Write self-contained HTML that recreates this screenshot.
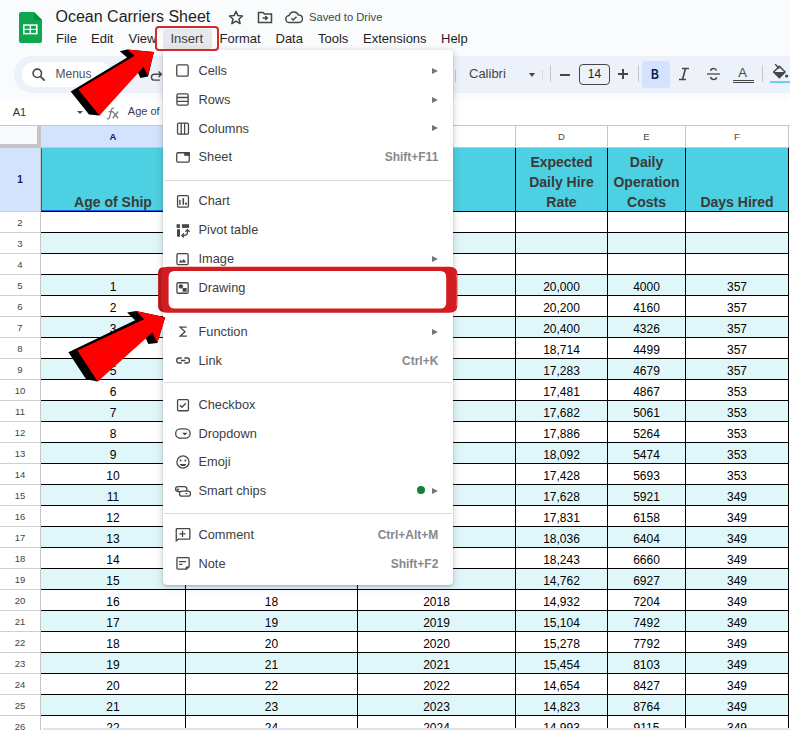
<!DOCTYPE html>
<html><head><meta charset="utf-8">
<style>
*{margin:0;padding:0;box-sizing:border-box}
html,body{width:790px;height:730px;overflow:hidden;background:#f9fbfd;font-family:"Liberation Sans",sans-serif;color:#1f1f1f;position:relative}
.a{position:absolute;white-space:nowrap}
.mb{font-size:13px;top:30.7px;line-height:16px}
#grid{position:absolute;left:0;top:125px;width:790px;height:605px;background:#fff;overflow:hidden}
table{border-collapse:collapse;table-layout:fixed;position:absolute;left:0;top:0}
td{padding:0;overflow:hidden;white-space:nowrap;text-align:center}
.rh{font-size:10px;color:#444;border-right:1px solid #c7c7c7;border-bottom:1px solid #e1e1e1;background:#fff}
.ch{font-size:10px;color:#444;border-right:1px solid #e1e1e1;border-bottom:1px solid #c7c7c7;border-top:1px solid #c7c7c7;height:22px;vertical-align:middle}
.d td.c{border:1px solid #000;font-size:12px;color:#000;height:21px}
.lt td.c{background:#e0f7fa}
#menu{position:absolute;left:163px;top:52px;width:290px;height:533px;background:#fff;border-radius:4px;box-shadow:0 2px 6px 2px rgba(60,64,67,.15),0 1px 2px rgba(60,64,67,.3)}
.mi{position:absolute;left:0;width:290px;height:20px;font-size:12.5px;color:#1f1f1f}
.mi .t{position:absolute;left:35px;top:2px}
.mi .k{position:absolute;right:15px;top:2px;color:#80868b;font-size:12.5px}
.mi .ar{position:absolute;right:15px;top:5px;width:0;height:0;border-left:6px solid #6f7377;border-top:3.5px solid transparent;border-bottom:3.5px solid transparent}
.mi svg{position:absolute;left:12px;top:3px}
.sep{position:absolute;left:1px;width:288px;height:1px;background:#dadce0}
</style></head><body>

<!-- logo -->
<svg class="a" style="left:19px;top:12px" width="23" height="31" viewBox="0 0 23 31">
<path d="M2 0H15L23 8V29a2 2 0 0 1-2 2H2a2 2 0 0 1-2-2V2a2 2 0 0 1 2-2z" fill="#0ea64e"/>
<path d="M15 0L23 8H17a2 2 0 0 1-2-2z" fill="#07903c"/>
<rect x="4" y="12.3" width="14.6" height="10.1" fill="#fff"/>
<rect x="5.6" y="13.8" width="5" height="3" fill="#0ea64e"/>
<rect x="12" y="13.8" width="5" height="3" fill="#0ea64e"/>
<rect x="5.6" y="17.9" width="5" height="3" fill="#0ea64e"/>
<rect x="12" y="17.9" width="5" height="3" fill="#0ea64e"/>
</svg>

<div class="a" style="left:55.5px;top:7.2px;font-size:16px;line-height:19px;color:#1f1f1f">Ocean Carriers Sheet</div>
<!-- star -->
<svg class="a" style="left:228px;top:10px" width="16" height="15" viewBox="0 0 16 15"><path d="M8 1.3l1.9 4.3 4.6.4-3.5 3 1.1 4.6L8 11.2l-4.1 2.4L5 9 1.5 6l4.6-.4z" fill="none" stroke="#444746" stroke-width="1.5" stroke-linejoin="round"/></svg>
<!-- folder -->
<svg class="a" style="left:257px;top:11px" width="16" height="13" viewBox="0 0 16 13"><path d="M1.5 1.5h4.5l1.5 1.5h7v8.5h-13z" fill="none" stroke="#444746" stroke-width="1.5"/><path d="M5.5 7h4.5M8.3 5l2 2-2 2" fill="none" stroke="#444746" stroke-width="1.5"/></svg>
<!-- cloud -->
<svg class="a" style="left:285px;top:11px" width="18" height="13" viewBox="0 0 18 13"><path d="M4.5 11.5a3.5 3.5 0 0 1-.4-7A5 5 0 0 1 13.5 4a3.7 3.7 0 0 1 .5 7.5z" fill="none" stroke="#444746" stroke-width="1.5"/><path d="M6.3 7.3l1.8 1.8 3.4-3.4" fill="none" stroke="#444746" stroke-width="1.4"/></svg>
<div class="a" style="left:309px;top:10.2px;font-size:11.2px;line-height:14px;color:#444746">Saved to Drive</div>

<!-- menubar -->
<div class="a" style="left:162.8px;top:29px;width:49.5px;height:20px;background:#e6e8eb;border-radius:3px"></div>
<div class="a mb" style="left:56px">File</div>
<div class="a mb" style="left:91px">Edit</div>
<div class="a mb" style="left:128.5px">View</div>
<div class="a mb" style="left:170.5px;color:#3c3c3c">Insert</div>
<div class="a mb" style="left:219.5px">Format</div>
<div class="a mb" style="left:275.5px">Data</div>
<div class="a mb" style="left:318px">Tools</div>
<div class="a mb" style="left:363px">Extensions</div>
<div class="a mb" style="left:441px">Help</div>
<div class="a" style="z-index:5;left:155.2px;top:26px;width:64px;height:25.2px;border:2.2px solid #d42a2a;border-radius:4px"></div>

<!-- toolbar -->
<div class="a" style="left:14px;top:56px;width:800px;height:36.5px;background:#edf2fa;border-radius:18px"></div>
<div class="a" style="left:22px;top:62px;width:90px;height:25px;background:#fff;border-radius:12.5px"></div>
<svg class="a" style="left:32px;top:68px" width="14" height="13" viewBox="0 0 14 13"><circle cx="5.3" cy="5.3" r="4.2" fill="none" stroke="#444746" stroke-width="1.6"/><path d="M8.3 8.3l4.4 4.4" stroke="#444746" stroke-width="1.7"/></svg>
<div class="a" style="left:55.5px;top:67px;font-size:12px;line-height:14px;color:#4d5156">Menus</div>
<svg class="a" style="left:148px;top:68px" width="16" height="16" viewBox="148 68 16 16"><path d="M160 80.1H154.4a2.95 2.95 0 0 1 0-5.9H161.3M158.6 71.4l2.8 2.8-2.8 2.8" fill="none" stroke="#444746" stroke-width="1.4"/></svg>
<div class="a" style="left:455px;top:70px;width:1px;height:12px;background:#c7c7c7"></div>
<div class="a" style="left:469px;top:66px;font-size:13px;line-height:16px;color:#444746">Calibri</div>
<div class="a" style="left:529px;top:72.5px;width:0;height:0;border-top:4px solid #444746;border-left:3.7px solid transparent;border-right:3.7px solid transparent"></div>
<div class="a" style="left:542px;top:71px;width:1px;height:9px;border-left:1px dotted #c7c7c7"></div>
<div class="a" style="left:550px;top:65px;width:1px;height:17px;background:#c7c7c7"></div>
<div class="a" style="left:560px;top:74px;width:10px;height:1.5px;background:#444746"></div>
<div class="a" style="left:579px;top:64px;width:31px;height:20.5px;border:1px solid #444746;border-radius:4px;font-size:12px;line-height:18px;text-align:center;color:#1f1f1f">14</div>
<div class="a" style="left:618px;top:73.3px;width:10px;height:1.5px;background:#444746"></div>
<div class="a" style="left:622.3px;top:69px;width:1.5px;height:10px;background:#444746"></div>
<div class="a" style="left:638px;top:65px;width:1px;height:17px;background:#c7c7c7"></div>
<div class="a" style="left:642px;top:61px;width:27.5px;height:27px;background:#d3e3fd;border-radius:4px"></div>
<div class="a" style="left:650.5px;top:66.5px;font-size:14px;font-weight:bold;line-height:15px;color:#0b1f51;transform:scaleX(.78);transform-origin:0 0">B</div>
<svg class="a" style="left:678px;top:67px" width="12" height="14" viewBox="0 0 12 14"><path d="M4 1.5h7M1 12.5h7M7.5 1.5l-3 11" fill="none" stroke="#444746" stroke-width="1.6"/></svg>
<svg class="a" style="left:706px;top:66px" width="15" height="16" viewBox="0 0 15 16"><path d="M1 8h13" stroke="#444746" stroke-width="1.3"/><path d="M10.5 4.5C10 3 9 2.5 7.5 2.5S4.5 3.5 4.8 5M4.5 11c.5 1.5 1.5 2.5 3 2.5s3-1 3-2.3" fill="none" stroke="#444746" stroke-width="1.5"/></svg>
<div class="a" style="left:738.3px;top:64.6px;font-size:13px;line-height:15px;color:#444746">A</div>
<div class="a" style="left:733px;top:80px;width:21px;height:1.3px;background:#444746"></div>
<div class="a" style="left:733px;top:82.2px;width:21px;height:1.3px;background:#444746"></div>
<div class="a" style="left:762px;top:65px;width:1px;height:17px;background:#c7c7c7"></div>
<svg class="a" style="left:765px;top:60px" width="25" height="26" viewBox="765 60 25 26"><path d="M773.6 72L779.4 66.3 785.1 72 779.4 77.7z" fill="none" stroke="#444746" stroke-width="1.5" stroke-linejoin="round"/><path d="M773.6 72H785.1L779.4 77.7z" fill="#444746"/><path d="M775.2 64.3l4.2 4.2" stroke="#444746" stroke-width="1.5"/><circle cx="786.6" cy="76" r="1.6" fill="#444746"/><rect x="770" y="81.3" width="20" height="1.6" fill="#4dc6e0"/></svg>

<!-- formula bar -->
<div class="a" style="left:0;top:100px;width:790px;height:26px;background:#fff"></div>
<div class="a" style="left:12.7px;top:104.7px;font-size:11px;line-height:14px;color:#333">A1</div>
<div class="a" style="left:77.3px;top:110.6px;width:0;height:0;border-top:3.6px solid #444746;border-left:3.9px solid transparent;border-right:3.9px solid transparent"></div>
<svg class="a" style="left:100px;top:100px" width="25" height="25" viewBox="100 100 25 25"><path d="M114 108.3c-1.2-.5-2.2 0-2.6 1.6l-1.8 7.3c-.4 1.5-1.3 2-2.6 1.5M108.6 111.6h4.2" fill="none" stroke="#7d7d7d" stroke-width="1.3"/><path d="M112.8 111.6l5.3 6.6M118 111.6l-5.2 6.6" fill="none" stroke="#7d7d7d" stroke-width="1.4"/></svg>
<div class="a" style="left:127.8px;top:104.2px;font-size:11px;line-height:14px;color:#3c4043">Age of Ship</div>

<div class="a" style="left:0;top:125px;width:790px;height:605px;background:#fff"></div>
<div class="a" style="left:0;top:125px;width:790px;height:1px;background:#c7c7c7"></div>
<div class="a" style="left:0;top:126px;width:37px;height:18px;background:#f8f9fa"></div>
<div class="a" style="left:37px;top:126px;width:4px;height:22px;background:#c4c4c4"></div>
<div class="a" style="left:0;top:144px;width:41px;height:4px;background:#c4c4c4"></div>
<div class="a" style="left:41px;top:126px;width:144px;height:21px;background:#d3e3fd"></div>
<div class="a" style="left:41px;top:126px;width:144px;height:21px;line-height:21px;text-align:center;font-size:9.5px;font-weight:bold;color:#0b1f51">A</div>
<div class="a" style="left:185px;top:126px;width:1px;height:21px;background:#c7c7c7"></div>
<div class="a" style="left:186px;top:126px;width:171px;height:21px;line-height:21px;text-align:center;font-size:9.5px;color:#444">B</div>
<div class="a" style="left:357px;top:126px;width:1px;height:21px;background:#c7c7c7"></div>
<div class="a" style="left:358px;top:126px;width:157px;height:21px;line-height:21px;text-align:center;font-size:9.5px;color:#444">C</div>
<div class="a" style="left:515px;top:126px;width:1px;height:21px;background:#c7c7c7"></div>
<div class="a" style="left:516px;top:126px;width:91px;height:21px;line-height:21px;text-align:center;font-size:9.5px;color:#444">D</div>
<div class="a" style="left:607px;top:126px;width:1px;height:21px;background:#c7c7c7"></div>
<div class="a" style="left:608px;top:126px;width:77px;height:21px;line-height:21px;text-align:center;font-size:9.5px;color:#444">E</div>
<div class="a" style="left:685px;top:126px;width:1px;height:21px;background:#c7c7c7"></div>
<div class="a" style="left:686px;top:126px;width:102px;height:21px;line-height:21px;text-align:center;font-size:9.5px;color:#444">F</div>
<div class="a" style="left:788px;top:126px;width:1px;height:21px;background:#c7c7c7"></div>
<div class="a" style="left:0;top:148px;width:40px;height:63px;background:#d3e3fd"></div>
<div class="a" style="left:40px;top:148px;width:1px;height:582px;background:#c7c7c7"></div>
<div class="a" style="left:0;top:147px;width:790px;height:1px;background:#c7c7c7"></div>
<div class="a" style="left:41px;top:148px;width:747px;height:63px;background:#4dd0e1"></div>
<div class="a" style="left:0;top:148px;width:40px;height:63px;line-height:63px;text-align:center;font-size:10px;font-weight:bold;color:#0b1f51">1</div>
<div class="a" style="left:41px;top:192px;width:144px;line-height:20px;text-align:center;font-size:14px;font-weight:bold;color:#3a3a3a;white-space:normal">Age of Ship</div>
<div class="a" style="left:516px;top:152px;width:91px;line-height:20px;text-align:center;font-size:14px;font-weight:bold;color:#3a3a3a;white-space:normal">Expected<br>Daily Hire<br>Rate</div>
<div class="a" style="left:608px;top:152px;width:77px;line-height:20px;text-align:center;font-size:14px;font-weight:bold;color:#3a3a3a;white-space:normal">Daily<br>Operation<br>Costs</div>
<div class="a" style="left:686px;top:192px;width:102px;line-height:20px;text-align:center;font-size:14px;font-weight:bold;color:#3a3a3a;white-space:normal">Days Hired</div>
<div class="a" style="left:185px;top:148px;width:1px;height:63px;background:#000"></div>
<div class="a" style="left:357px;top:148px;width:1px;height:63px;background:#000"></div>
<div class="a" style="left:515px;top:148px;width:1px;height:63px;background:#000"></div>
<div class="a" style="left:607px;top:148px;width:1px;height:63px;background:#000"></div>
<div class="a" style="left:685px;top:148px;width:1px;height:63px;background:#000"></div>
<div class="a" style="left:788px;top:148px;width:1px;height:63px;background:#000"></div>
<div class="a" style="left:0;top:232px;width:40px;height:1px;background:#d0d0d0"></div>
<div class="a" style="left:0;top:212.8px;width:40px;height:20px;line-height:20px;text-align:center;font-size:9.5px;color:#444">2</div>
<div class="a" style="left:41px;top:232px;width:748px;height:1px;background:#000"></div>
<div class="a" style="left:0;top:253px;width:40px;height:1px;background:#d0d0d0"></div>
<div class="a" style="left:0;top:233.8px;width:40px;height:20px;line-height:20px;text-align:center;font-size:9.5px;color:#444">3</div>
<div class="a" style="left:41px;top:233px;width:747px;height:20px;background:#e0f7fa"></div>
<div class="a" style="left:41px;top:253px;width:748px;height:1px;background:#000"></div>
<div class="a" style="left:0;top:274px;width:40px;height:1px;background:#d0d0d0"></div>
<div class="a" style="left:0;top:254.8px;width:40px;height:20px;line-height:20px;text-align:center;font-size:9.5px;color:#444">4</div>
<div class="a" style="left:41px;top:274px;width:748px;height:1px;background:#000"></div>
<div class="a" style="left:0;top:295px;width:40px;height:1px;background:#d0d0d0"></div>
<div class="a" style="left:0;top:275.8px;width:40px;height:20px;line-height:20px;text-align:center;font-size:9.5px;color:#444">5</div>
<div class="a" style="left:41px;top:275px;width:747px;height:20px;background:#e0f7fa"></div>
<div class="a" style="left:41px;top:295px;width:748px;height:1px;background:#000"></div>
<div class="a" style="left:41px;top:276.8px;width:144px;line-height:20px;text-align:center;font-size:12px;color:#000">1</div>
<div class="a" style="left:186px;top:276.8px;width:171px;line-height:20px;text-align:center;font-size:12px;color:#000">3</div>
<div class="a" style="left:358px;top:276.8px;width:157px;line-height:20px;text-align:center;font-size:12px;color:#000">2003</div>
<div class="a" style="left:516px;top:276.8px;width:91px;line-height:20px;text-align:center;font-size:12px;color:#000">20,000</div>
<div class="a" style="left:608px;top:276.8px;width:77px;line-height:20px;text-align:center;font-size:12px;color:#000">4000</div>
<div class="a" style="left:686px;top:276.8px;width:102px;line-height:20px;text-align:center;font-size:12px;color:#000">357</div>
<div class="a" style="left:0;top:316px;width:40px;height:1px;background:#d0d0d0"></div>
<div class="a" style="left:0;top:296.8px;width:40px;height:20px;line-height:20px;text-align:center;font-size:9.5px;color:#444">6</div>
<div class="a" style="left:41px;top:316px;width:748px;height:1px;background:#000"></div>
<div class="a" style="left:41px;top:297.8px;width:144px;line-height:20px;text-align:center;font-size:12px;color:#000">2</div>
<div class="a" style="left:186px;top:297.8px;width:171px;line-height:20px;text-align:center;font-size:12px;color:#000">4</div>
<div class="a" style="left:358px;top:297.8px;width:157px;line-height:20px;text-align:center;font-size:12px;color:#000">2004</div>
<div class="a" style="left:516px;top:297.8px;width:91px;line-height:20px;text-align:center;font-size:12px;color:#000">20,200</div>
<div class="a" style="left:608px;top:297.8px;width:77px;line-height:20px;text-align:center;font-size:12px;color:#000">4160</div>
<div class="a" style="left:686px;top:297.8px;width:102px;line-height:20px;text-align:center;font-size:12px;color:#000">357</div>
<div class="a" style="left:0;top:337px;width:40px;height:1px;background:#d0d0d0"></div>
<div class="a" style="left:0;top:317.8px;width:40px;height:20px;line-height:20px;text-align:center;font-size:9.5px;color:#444">7</div>
<div class="a" style="left:41px;top:317px;width:747px;height:20px;background:#e0f7fa"></div>
<div class="a" style="left:41px;top:337px;width:748px;height:1px;background:#000"></div>
<div class="a" style="left:41px;top:318.8px;width:144px;line-height:20px;text-align:center;font-size:12px;color:#000">3</div>
<div class="a" style="left:186px;top:318.8px;width:171px;line-height:20px;text-align:center;font-size:12px;color:#000">5</div>
<div class="a" style="left:358px;top:318.8px;width:157px;line-height:20px;text-align:center;font-size:12px;color:#000">2005</div>
<div class="a" style="left:516px;top:318.8px;width:91px;line-height:20px;text-align:center;font-size:12px;color:#000">20,400</div>
<div class="a" style="left:608px;top:318.8px;width:77px;line-height:20px;text-align:center;font-size:12px;color:#000">4326</div>
<div class="a" style="left:686px;top:318.8px;width:102px;line-height:20px;text-align:center;font-size:12px;color:#000">357</div>
<div class="a" style="left:0;top:358px;width:40px;height:1px;background:#d0d0d0"></div>
<div class="a" style="left:0;top:338.8px;width:40px;height:20px;line-height:20px;text-align:center;font-size:9.5px;color:#444">8</div>
<div class="a" style="left:41px;top:358px;width:748px;height:1px;background:#000"></div>
<div class="a" style="left:41px;top:339.8px;width:144px;line-height:20px;text-align:center;font-size:12px;color:#000">4</div>
<div class="a" style="left:186px;top:339.8px;width:171px;line-height:20px;text-align:center;font-size:12px;color:#000">6</div>
<div class="a" style="left:358px;top:339.8px;width:157px;line-height:20px;text-align:center;font-size:12px;color:#000">2006</div>
<div class="a" style="left:516px;top:339.8px;width:91px;line-height:20px;text-align:center;font-size:12px;color:#000">18,714</div>
<div class="a" style="left:608px;top:339.8px;width:77px;line-height:20px;text-align:center;font-size:12px;color:#000">4499</div>
<div class="a" style="left:686px;top:339.8px;width:102px;line-height:20px;text-align:center;font-size:12px;color:#000">357</div>
<div class="a" style="left:0;top:379px;width:40px;height:1px;background:#d0d0d0"></div>
<div class="a" style="left:0;top:359.8px;width:40px;height:20px;line-height:20px;text-align:center;font-size:9.5px;color:#444">9</div>
<div class="a" style="left:41px;top:359px;width:747px;height:20px;background:#e0f7fa"></div>
<div class="a" style="left:41px;top:379px;width:748px;height:1px;background:#000"></div>
<div class="a" style="left:41px;top:360.8px;width:144px;line-height:20px;text-align:center;font-size:12px;color:#000">5</div>
<div class="a" style="left:186px;top:360.8px;width:171px;line-height:20px;text-align:center;font-size:12px;color:#000">7</div>
<div class="a" style="left:358px;top:360.8px;width:157px;line-height:20px;text-align:center;font-size:12px;color:#000">2007</div>
<div class="a" style="left:516px;top:360.8px;width:91px;line-height:20px;text-align:center;font-size:12px;color:#000">17,283</div>
<div class="a" style="left:608px;top:360.8px;width:77px;line-height:20px;text-align:center;font-size:12px;color:#000">4679</div>
<div class="a" style="left:686px;top:360.8px;width:102px;line-height:20px;text-align:center;font-size:12px;color:#000">357</div>
<div class="a" style="left:0;top:400px;width:40px;height:1px;background:#d0d0d0"></div>
<div class="a" style="left:0;top:380.8px;width:40px;height:20px;line-height:20px;text-align:center;font-size:9.5px;color:#444">10</div>
<div class="a" style="left:41px;top:400px;width:748px;height:1px;background:#000"></div>
<div class="a" style="left:41px;top:381.8px;width:144px;line-height:20px;text-align:center;font-size:12px;color:#000">6</div>
<div class="a" style="left:186px;top:381.8px;width:171px;line-height:20px;text-align:center;font-size:12px;color:#000">8</div>
<div class="a" style="left:358px;top:381.8px;width:157px;line-height:20px;text-align:center;font-size:12px;color:#000">2008</div>
<div class="a" style="left:516px;top:381.8px;width:91px;line-height:20px;text-align:center;font-size:12px;color:#000">17,481</div>
<div class="a" style="left:608px;top:381.8px;width:77px;line-height:20px;text-align:center;font-size:12px;color:#000">4867</div>
<div class="a" style="left:686px;top:381.8px;width:102px;line-height:20px;text-align:center;font-size:12px;color:#000">353</div>
<div class="a" style="left:0;top:421px;width:40px;height:1px;background:#d0d0d0"></div>
<div class="a" style="left:0;top:401.8px;width:40px;height:20px;line-height:20px;text-align:center;font-size:9.5px;color:#444">11</div>
<div class="a" style="left:41px;top:401px;width:747px;height:20px;background:#e0f7fa"></div>
<div class="a" style="left:41px;top:421px;width:748px;height:1px;background:#000"></div>
<div class="a" style="left:41px;top:402.8px;width:144px;line-height:20px;text-align:center;font-size:12px;color:#000">7</div>
<div class="a" style="left:186px;top:402.8px;width:171px;line-height:20px;text-align:center;font-size:12px;color:#000">9</div>
<div class="a" style="left:358px;top:402.8px;width:157px;line-height:20px;text-align:center;font-size:12px;color:#000">2009</div>
<div class="a" style="left:516px;top:402.8px;width:91px;line-height:20px;text-align:center;font-size:12px;color:#000">17,682</div>
<div class="a" style="left:608px;top:402.8px;width:77px;line-height:20px;text-align:center;font-size:12px;color:#000">5061</div>
<div class="a" style="left:686px;top:402.8px;width:102px;line-height:20px;text-align:center;font-size:12px;color:#000">353</div>
<div class="a" style="left:0;top:442px;width:40px;height:1px;background:#d0d0d0"></div>
<div class="a" style="left:0;top:422.8px;width:40px;height:20px;line-height:20px;text-align:center;font-size:9.5px;color:#444">12</div>
<div class="a" style="left:41px;top:442px;width:748px;height:1px;background:#000"></div>
<div class="a" style="left:41px;top:423.8px;width:144px;line-height:20px;text-align:center;font-size:12px;color:#000">8</div>
<div class="a" style="left:186px;top:423.8px;width:171px;line-height:20px;text-align:center;font-size:12px;color:#000">10</div>
<div class="a" style="left:358px;top:423.8px;width:157px;line-height:20px;text-align:center;font-size:12px;color:#000">2010</div>
<div class="a" style="left:516px;top:423.8px;width:91px;line-height:20px;text-align:center;font-size:12px;color:#000">17,886</div>
<div class="a" style="left:608px;top:423.8px;width:77px;line-height:20px;text-align:center;font-size:12px;color:#000">5264</div>
<div class="a" style="left:686px;top:423.8px;width:102px;line-height:20px;text-align:center;font-size:12px;color:#000">353</div>
<div class="a" style="left:0;top:463px;width:40px;height:1px;background:#d0d0d0"></div>
<div class="a" style="left:0;top:443.8px;width:40px;height:20px;line-height:20px;text-align:center;font-size:9.5px;color:#444">13</div>
<div class="a" style="left:41px;top:443px;width:747px;height:20px;background:#e0f7fa"></div>
<div class="a" style="left:41px;top:463px;width:748px;height:1px;background:#000"></div>
<div class="a" style="left:41px;top:444.8px;width:144px;line-height:20px;text-align:center;font-size:12px;color:#000">9</div>
<div class="a" style="left:186px;top:444.8px;width:171px;line-height:20px;text-align:center;font-size:12px;color:#000">11</div>
<div class="a" style="left:358px;top:444.8px;width:157px;line-height:20px;text-align:center;font-size:12px;color:#000">2011</div>
<div class="a" style="left:516px;top:444.8px;width:91px;line-height:20px;text-align:center;font-size:12px;color:#000">18,092</div>
<div class="a" style="left:608px;top:444.8px;width:77px;line-height:20px;text-align:center;font-size:12px;color:#000">5474</div>
<div class="a" style="left:686px;top:444.8px;width:102px;line-height:20px;text-align:center;font-size:12px;color:#000">353</div>
<div class="a" style="left:0;top:484px;width:40px;height:1px;background:#d0d0d0"></div>
<div class="a" style="left:0;top:464.8px;width:40px;height:20px;line-height:20px;text-align:center;font-size:9.5px;color:#444">14</div>
<div class="a" style="left:41px;top:484px;width:748px;height:1px;background:#000"></div>
<div class="a" style="left:41px;top:465.8px;width:144px;line-height:20px;text-align:center;font-size:12px;color:#000">10</div>
<div class="a" style="left:186px;top:465.8px;width:171px;line-height:20px;text-align:center;font-size:12px;color:#000">12</div>
<div class="a" style="left:358px;top:465.8px;width:157px;line-height:20px;text-align:center;font-size:12px;color:#000">2012</div>
<div class="a" style="left:516px;top:465.8px;width:91px;line-height:20px;text-align:center;font-size:12px;color:#000">17,428</div>
<div class="a" style="left:608px;top:465.8px;width:77px;line-height:20px;text-align:center;font-size:12px;color:#000">5693</div>
<div class="a" style="left:686px;top:465.8px;width:102px;line-height:20px;text-align:center;font-size:12px;color:#000">353</div>
<div class="a" style="left:0;top:505px;width:40px;height:1px;background:#d0d0d0"></div>
<div class="a" style="left:0;top:485.8px;width:40px;height:20px;line-height:20px;text-align:center;font-size:9.5px;color:#444">15</div>
<div class="a" style="left:41px;top:485px;width:747px;height:20px;background:#e0f7fa"></div>
<div class="a" style="left:41px;top:505px;width:748px;height:1px;background:#000"></div>
<div class="a" style="left:41px;top:486.8px;width:144px;line-height:20px;text-align:center;font-size:12px;color:#000">11</div>
<div class="a" style="left:186px;top:486.8px;width:171px;line-height:20px;text-align:center;font-size:12px;color:#000">13</div>
<div class="a" style="left:358px;top:486.8px;width:157px;line-height:20px;text-align:center;font-size:12px;color:#000">2013</div>
<div class="a" style="left:516px;top:486.8px;width:91px;line-height:20px;text-align:center;font-size:12px;color:#000">17,628</div>
<div class="a" style="left:608px;top:486.8px;width:77px;line-height:20px;text-align:center;font-size:12px;color:#000">5921</div>
<div class="a" style="left:686px;top:486.8px;width:102px;line-height:20px;text-align:center;font-size:12px;color:#000">349</div>
<div class="a" style="left:0;top:526px;width:40px;height:1px;background:#d0d0d0"></div>
<div class="a" style="left:0;top:506.8px;width:40px;height:20px;line-height:20px;text-align:center;font-size:9.5px;color:#444">16</div>
<div class="a" style="left:41px;top:526px;width:748px;height:1px;background:#000"></div>
<div class="a" style="left:41px;top:507.8px;width:144px;line-height:20px;text-align:center;font-size:12px;color:#000">12</div>
<div class="a" style="left:186px;top:507.8px;width:171px;line-height:20px;text-align:center;font-size:12px;color:#000">14</div>
<div class="a" style="left:358px;top:507.8px;width:157px;line-height:20px;text-align:center;font-size:12px;color:#000">2014</div>
<div class="a" style="left:516px;top:507.8px;width:91px;line-height:20px;text-align:center;font-size:12px;color:#000">17,831</div>
<div class="a" style="left:608px;top:507.8px;width:77px;line-height:20px;text-align:center;font-size:12px;color:#000">6158</div>
<div class="a" style="left:686px;top:507.8px;width:102px;line-height:20px;text-align:center;font-size:12px;color:#000">349</div>
<div class="a" style="left:0;top:547px;width:40px;height:1px;background:#d0d0d0"></div>
<div class="a" style="left:0;top:527.8px;width:40px;height:20px;line-height:20px;text-align:center;font-size:9.5px;color:#444">17</div>
<div class="a" style="left:41px;top:527px;width:747px;height:20px;background:#e0f7fa"></div>
<div class="a" style="left:41px;top:547px;width:748px;height:1px;background:#000"></div>
<div class="a" style="left:41px;top:528.8px;width:144px;line-height:20px;text-align:center;font-size:12px;color:#000">13</div>
<div class="a" style="left:186px;top:528.8px;width:171px;line-height:20px;text-align:center;font-size:12px;color:#000">15</div>
<div class="a" style="left:358px;top:528.8px;width:157px;line-height:20px;text-align:center;font-size:12px;color:#000">2015</div>
<div class="a" style="left:516px;top:528.8px;width:91px;line-height:20px;text-align:center;font-size:12px;color:#000">18,036</div>
<div class="a" style="left:608px;top:528.8px;width:77px;line-height:20px;text-align:center;font-size:12px;color:#000">6404</div>
<div class="a" style="left:686px;top:528.8px;width:102px;line-height:20px;text-align:center;font-size:12px;color:#000">349</div>
<div class="a" style="left:0;top:568px;width:40px;height:1px;background:#d0d0d0"></div>
<div class="a" style="left:0;top:548.8px;width:40px;height:20px;line-height:20px;text-align:center;font-size:9.5px;color:#444">18</div>
<div class="a" style="left:41px;top:568px;width:748px;height:1px;background:#000"></div>
<div class="a" style="left:41px;top:549.8px;width:144px;line-height:20px;text-align:center;font-size:12px;color:#000">14</div>
<div class="a" style="left:186px;top:549.8px;width:171px;line-height:20px;text-align:center;font-size:12px;color:#000">16</div>
<div class="a" style="left:358px;top:549.8px;width:157px;line-height:20px;text-align:center;font-size:12px;color:#000">2016</div>
<div class="a" style="left:516px;top:549.8px;width:91px;line-height:20px;text-align:center;font-size:12px;color:#000">18,243</div>
<div class="a" style="left:608px;top:549.8px;width:77px;line-height:20px;text-align:center;font-size:12px;color:#000">6660</div>
<div class="a" style="left:686px;top:549.8px;width:102px;line-height:20px;text-align:center;font-size:12px;color:#000">349</div>
<div class="a" style="left:0;top:589px;width:40px;height:1px;background:#d0d0d0"></div>
<div class="a" style="left:0;top:569.8px;width:40px;height:20px;line-height:20px;text-align:center;font-size:9.5px;color:#444">19</div>
<div class="a" style="left:41px;top:569px;width:747px;height:20px;background:#e0f7fa"></div>
<div class="a" style="left:41px;top:589px;width:748px;height:1px;background:#000"></div>
<div class="a" style="left:41px;top:570.8px;width:144px;line-height:20px;text-align:center;font-size:12px;color:#000">15</div>
<div class="a" style="left:186px;top:570.8px;width:171px;line-height:20px;text-align:center;font-size:12px;color:#000">17</div>
<div class="a" style="left:358px;top:570.8px;width:157px;line-height:20px;text-align:center;font-size:12px;color:#000">2017</div>
<div class="a" style="left:516px;top:570.8px;width:91px;line-height:20px;text-align:center;font-size:12px;color:#000">14,762</div>
<div class="a" style="left:608px;top:570.8px;width:77px;line-height:20px;text-align:center;font-size:12px;color:#000">6927</div>
<div class="a" style="left:686px;top:570.8px;width:102px;line-height:20px;text-align:center;font-size:12px;color:#000">349</div>
<div class="a" style="left:0;top:610px;width:40px;height:1px;background:#d0d0d0"></div>
<div class="a" style="left:0;top:590.8px;width:40px;height:20px;line-height:20px;text-align:center;font-size:9.5px;color:#444">20</div>
<div class="a" style="left:41px;top:610px;width:748px;height:1px;background:#000"></div>
<div class="a" style="left:41px;top:591.8px;width:144px;line-height:20px;text-align:center;font-size:12px;color:#000">16</div>
<div class="a" style="left:186px;top:591.8px;width:171px;line-height:20px;text-align:center;font-size:12px;color:#000">18</div>
<div class="a" style="left:358px;top:591.8px;width:157px;line-height:20px;text-align:center;font-size:12px;color:#000">2018</div>
<div class="a" style="left:516px;top:591.8px;width:91px;line-height:20px;text-align:center;font-size:12px;color:#000">14,932</div>
<div class="a" style="left:608px;top:591.8px;width:77px;line-height:20px;text-align:center;font-size:12px;color:#000">7204</div>
<div class="a" style="left:686px;top:591.8px;width:102px;line-height:20px;text-align:center;font-size:12px;color:#000">349</div>
<div class="a" style="left:0;top:631px;width:40px;height:1px;background:#d0d0d0"></div>
<div class="a" style="left:0;top:611.8px;width:40px;height:20px;line-height:20px;text-align:center;font-size:9.5px;color:#444">21</div>
<div class="a" style="left:41px;top:611px;width:747px;height:20px;background:#e0f7fa"></div>
<div class="a" style="left:41px;top:631px;width:748px;height:1px;background:#000"></div>
<div class="a" style="left:41px;top:612.8px;width:144px;line-height:20px;text-align:center;font-size:12px;color:#000">17</div>
<div class="a" style="left:186px;top:612.8px;width:171px;line-height:20px;text-align:center;font-size:12px;color:#000">19</div>
<div class="a" style="left:358px;top:612.8px;width:157px;line-height:20px;text-align:center;font-size:12px;color:#000">2019</div>
<div class="a" style="left:516px;top:612.8px;width:91px;line-height:20px;text-align:center;font-size:12px;color:#000">15,104</div>
<div class="a" style="left:608px;top:612.8px;width:77px;line-height:20px;text-align:center;font-size:12px;color:#000">7492</div>
<div class="a" style="left:686px;top:612.8px;width:102px;line-height:20px;text-align:center;font-size:12px;color:#000">349</div>
<div class="a" style="left:0;top:652px;width:40px;height:1px;background:#d0d0d0"></div>
<div class="a" style="left:0;top:632.8px;width:40px;height:20px;line-height:20px;text-align:center;font-size:9.5px;color:#444">22</div>
<div class="a" style="left:41px;top:652px;width:748px;height:1px;background:#000"></div>
<div class="a" style="left:41px;top:633.8px;width:144px;line-height:20px;text-align:center;font-size:12px;color:#000">18</div>
<div class="a" style="left:186px;top:633.8px;width:171px;line-height:20px;text-align:center;font-size:12px;color:#000">20</div>
<div class="a" style="left:358px;top:633.8px;width:157px;line-height:20px;text-align:center;font-size:12px;color:#000">2020</div>
<div class="a" style="left:516px;top:633.8px;width:91px;line-height:20px;text-align:center;font-size:12px;color:#000">15,278</div>
<div class="a" style="left:608px;top:633.8px;width:77px;line-height:20px;text-align:center;font-size:12px;color:#000">7792</div>
<div class="a" style="left:686px;top:633.8px;width:102px;line-height:20px;text-align:center;font-size:12px;color:#000">349</div>
<div class="a" style="left:0;top:673px;width:40px;height:1px;background:#d0d0d0"></div>
<div class="a" style="left:0;top:653.8px;width:40px;height:20px;line-height:20px;text-align:center;font-size:9.5px;color:#444">23</div>
<div class="a" style="left:41px;top:653px;width:747px;height:20px;background:#e0f7fa"></div>
<div class="a" style="left:41px;top:673px;width:748px;height:1px;background:#000"></div>
<div class="a" style="left:41px;top:654.8px;width:144px;line-height:20px;text-align:center;font-size:12px;color:#000">19</div>
<div class="a" style="left:186px;top:654.8px;width:171px;line-height:20px;text-align:center;font-size:12px;color:#000">21</div>
<div class="a" style="left:358px;top:654.8px;width:157px;line-height:20px;text-align:center;font-size:12px;color:#000">2021</div>
<div class="a" style="left:516px;top:654.8px;width:91px;line-height:20px;text-align:center;font-size:12px;color:#000">15,454</div>
<div class="a" style="left:608px;top:654.8px;width:77px;line-height:20px;text-align:center;font-size:12px;color:#000">8103</div>
<div class="a" style="left:686px;top:654.8px;width:102px;line-height:20px;text-align:center;font-size:12px;color:#000">349</div>
<div class="a" style="left:0;top:694px;width:40px;height:1px;background:#d0d0d0"></div>
<div class="a" style="left:0;top:674.8px;width:40px;height:20px;line-height:20px;text-align:center;font-size:9.5px;color:#444">24</div>
<div class="a" style="left:41px;top:694px;width:748px;height:1px;background:#000"></div>
<div class="a" style="left:41px;top:675.8px;width:144px;line-height:20px;text-align:center;font-size:12px;color:#000">20</div>
<div class="a" style="left:186px;top:675.8px;width:171px;line-height:20px;text-align:center;font-size:12px;color:#000">22</div>
<div class="a" style="left:358px;top:675.8px;width:157px;line-height:20px;text-align:center;font-size:12px;color:#000">2022</div>
<div class="a" style="left:516px;top:675.8px;width:91px;line-height:20px;text-align:center;font-size:12px;color:#000">14,654</div>
<div class="a" style="left:608px;top:675.8px;width:77px;line-height:20px;text-align:center;font-size:12px;color:#000">8427</div>
<div class="a" style="left:686px;top:675.8px;width:102px;line-height:20px;text-align:center;font-size:12px;color:#000">349</div>
<div class="a" style="left:0;top:715px;width:40px;height:1px;background:#d0d0d0"></div>
<div class="a" style="left:0;top:695.8px;width:40px;height:20px;line-height:20px;text-align:center;font-size:9.5px;color:#444">25</div>
<div class="a" style="left:41px;top:695px;width:747px;height:20px;background:#e0f7fa"></div>
<div class="a" style="left:41px;top:715px;width:748px;height:1px;background:#000"></div>
<div class="a" style="left:41px;top:696.8px;width:144px;line-height:20px;text-align:center;font-size:12px;color:#000">21</div>
<div class="a" style="left:186px;top:696.8px;width:171px;line-height:20px;text-align:center;font-size:12px;color:#000">23</div>
<div class="a" style="left:358px;top:696.8px;width:157px;line-height:20px;text-align:center;font-size:12px;color:#000">2023</div>
<div class="a" style="left:516px;top:696.8px;width:91px;line-height:20px;text-align:center;font-size:12px;color:#000">14,823</div>
<div class="a" style="left:608px;top:696.8px;width:77px;line-height:20px;text-align:center;font-size:12px;color:#000">8764</div>
<div class="a" style="left:686px;top:696.8px;width:102px;line-height:20px;text-align:center;font-size:12px;color:#000">349</div>
<div class="a" style="left:0;top:736px;width:40px;height:1px;background:#d0d0d0"></div>
<div class="a" style="left:0;top:716.8px;width:40px;height:20px;line-height:20px;text-align:center;font-size:9.5px;color:#444">26</div>
<div class="a" style="left:41px;top:736px;width:748px;height:1px;background:#000"></div>
<div class="a" style="left:41px;top:717.8px;width:144px;line-height:20px;text-align:center;font-size:12px;color:#000">22</div>
<div class="a" style="left:186px;top:717.8px;width:171px;line-height:20px;text-align:center;font-size:12px;color:#000">24</div>
<div class="a" style="left:358px;top:717.8px;width:157px;line-height:20px;text-align:center;font-size:12px;color:#000">2024</div>
<div class="a" style="left:516px;top:717.8px;width:91px;line-height:20px;text-align:center;font-size:12px;color:#000">14,993</div>
<div class="a" style="left:608px;top:717.8px;width:77px;line-height:20px;text-align:center;font-size:12px;color:#000">9115</div>
<div class="a" style="left:686px;top:717.8px;width:102px;line-height:20px;text-align:center;font-size:12px;color:#000">349</div>
<div class="a" style="left:185px;top:211px;width:1px;height:519px;background:#000"></div>
<div class="a" style="left:357px;top:211px;width:1px;height:519px;background:#000"></div>
<div class="a" style="left:515px;top:211px;width:1px;height:519px;background:#000"></div>
<div class="a" style="left:607px;top:211px;width:1px;height:519px;background:#000"></div>
<div class="a" style="left:685px;top:211px;width:1px;height:519px;background:#000"></div>
<div class="a" style="left:788px;top:211px;width:1px;height:519px;background:#000"></div>
<div class="a" style="left:41px;top:211px;width:748px;height:1px;background:#000"></div>
<div class="a" style="left:0;top:211px;width:40px;height:1px;background:#d0d0d0"></div>
<div class="a" style="left:41px;top:210px;width:144px;height:1px;background:#1a62e0"></div>
<div class="a" style="left:41px;top:148px;width:1px;height:63px;background:#1a62e0"></div>
<div class="a" style="left:43px;top:728px;width:747px;height:2px;background:#e3e3e3"></div>
<div class="a" style="left:163px;top:50px;width:290px;height:535px;background:#fff;border-radius:4px;box-shadow:0 2px 6px 2px rgba(60,64,67,.15),0 1px 2px rgba(60,64,67,.3)"></div>
<div class="a" style="left:198.5px;top:63.9px;font-size:12.8px;line-height:14px;color:#3c4043">Cells</div>
<div class="a" style="left:431.8px;top:67.5px;width:0;height:0;border-left:6px solid #757575;border-top:3.5px solid transparent;border-bottom:3.5px solid transparent"></div>
<div class="a" style="left:198.5px;top:92.9px;font-size:12.8px;line-height:14px;color:#3c4043">Rows</div>
<div class="a" style="left:431.8px;top:96.5px;width:0;height:0;border-left:6px solid #757575;border-top:3.5px solid transparent;border-bottom:3.5px solid transparent"></div>
<div class="a" style="left:198.5px;top:121.7px;font-size:12.8px;line-height:14px;color:#3c4043">Columns</div>
<div class="a" style="left:431.8px;top:125.3px;width:0;height:0;border-left:6px solid #757575;border-top:3.5px solid transparent;border-bottom:3.5px solid transparent"></div>
<div class="a" style="left:198.5px;top:150.4px;font-size:12.8px;line-height:14px;color:#3c4043">Sheet</div>
<div class="a" style="right:351.7px;top:150.4px;font-size:12px;font-weight:bold;line-height:14px;color:#85898d">Shift+F11</div>
<div class="a" style="left:198.5px;top:194.1px;font-size:12.8px;line-height:14px;color:#3c4043">Chart</div>
<div class="a" style="left:198.5px;top:223.1px;font-size:12.8px;line-height:14px;color:#3c4043">Pivot table</div>
<div class="a" style="left:198.5px;top:251.9px;font-size:12.8px;line-height:14px;color:#3c4043">Image</div>
<div class="a" style="left:431.8px;top:255.5px;width:0;height:0;border-left:6px solid #757575;border-top:3.5px solid transparent;border-bottom:3.5px solid transparent"></div>
<div class="a" style="left:198.5px;top:280.8px;font-size:12.8px;line-height:14px;color:#3c4043">Drawing</div>
<div class="a" style="left:198.5px;top:324.9px;font-size:12.8px;line-height:14px;color:#3c4043">Function</div>
<div class="a" style="left:431.8px;top:328.5px;width:0;height:0;border-left:6px solid #757575;border-top:3.5px solid transparent;border-bottom:3.5px solid transparent"></div>
<div class="a" style="left:198.5px;top:353.9px;font-size:12.8px;line-height:14px;color:#3c4043">Link</div>
<div class="a" style="right:351.7px;top:353.9px;font-size:12px;font-weight:bold;line-height:14px;color:#85898d">Ctrl+K</div>
<div class="a" style="left:198.5px;top:397.9px;font-size:12.8px;line-height:14px;color:#3c4043">Checkbox</div>
<div class="a" style="left:198.5px;top:426.8px;font-size:12.8px;line-height:14px;color:#3c4043">Dropdown</div>
<div class="a" style="left:198.5px;top:455.4px;font-size:12.8px;line-height:14px;color:#3c4043">Emoji</div>
<div class="a" style="left:198.5px;top:484.0px;font-size:12.8px;line-height:14px;color:#3c4043">Smart chips</div>
<div class="a" style="left:431.8px;top:487.6px;width:0;height:0;border-left:6px solid #757575;border-top:3.5px solid transparent;border-bottom:3.5px solid transparent"></div>
<div class="a" style="left:417px;top:486.1px;width:8px;height:8px;border-radius:50%;background:#188038"></div>
<div class="a" style="left:198.5px;top:527.9px;font-size:12.8px;line-height:14px;color:#3c4043">Comment</div>
<div class="a" style="right:351.7px;top:527.9px;font-size:12px;font-weight:bold;line-height:14px;color:#85898d">Ctrl+Alt+M</div>
<div class="a" style="left:198.5px;top:556.9px;font-size:12.8px;line-height:14px;color:#3c4043">Note</div>
<div class="a" style="right:351.7px;top:556.9px;font-size:12px;font-weight:bold;line-height:14px;color:#85898d">Shift+F2</div>
<svg class="a" style="left:170px;top:50px" width="30" height="530" viewBox="170 50 30 530"><rect x="176.75" y="64.95" width="11.40" height="11.20" rx="1.2" stroke="#444746" fill="none" stroke-width="1.3"/><rect x="176.95" y="93.85" width="11.20" height="11.20" rx="1.2" stroke="#444746" fill="none" stroke-width="1.3"/><path d="M177 97.5h11M177 101.4h11" stroke="#444746" fill="none" stroke-width="1.3"/><rect x="177.55" y="123.15" width="10.90" height="11.00" rx="1.2" stroke="#444746" fill="none" stroke-width="1.3"/><path d="M181.2 123v11.5M184.6 123v11.5" stroke="#444746" fill="none" stroke-width="1.3"/><rect x="176.75" y="152.75" width="12.50" height="9.30" rx="1.2" stroke="#444746" fill="none" stroke-width="1.3"/><rect x="184.2" y="152.1" width="5.7" height="3.7" fill="#444746"/><rect x="177.55" y="195.65" width="10.90" height="11.50" rx="1.2" stroke="#444746" fill="none" stroke-width="1.3"/><rect x="179.2" y="199.9" width="1.4" height="4.9" fill="#444746"/><rect x="182.5" y="198.2" width="1.6" height="6.6" fill="#444746"/><rect x="185.2" y="202.5" width="1.7" height="2.3" fill="#444746"/><rect x="176.6" y="224.2" width="3.3" height="3.7" fill="#444746"/><rect x="181.9" y="224.2" width="7.2" height="3.7" fill="#444746"/><rect x="177" y="229.2" width="3" height="7.5" fill="#444746"/><path d="M182.6 235.4H184.2Q187.5 235.4 187.5 232.1V230" stroke="#444746" fill="none" stroke-width="1.3" stroke-width="1.3"/><path d="M185.4 231.7l2.1-2.1 2.1 2.1M184 233.3l-2.1 2.1 2.1 2.1" stroke="#444746" fill="none" stroke-width="1.3" stroke-width="1.3"/><rect x="176.95" y="253.55" width="11.20" height="11.00" rx="1.2" stroke="#444746" fill="none" stroke-width="1.3"/><path d="M178.9 262.5l1.7-2.7 1.3 1.5 1.9-2.3 2.3 3.5z" fill="#444746"/><rect x="176.95" y="282.75" width="11.20" height="10.50" rx="1.2" stroke="#444746" fill="none" stroke-width="1.3"/><circle cx="180.9" cy="286.4" r="2.2" fill="#444746"/><rect x="182.6" y="288" width="4.1" height="3.7" fill="#444746"/><path d="M186.6 327.2H180.2L185 331.7 180.2 336.2H186.9" stroke="#444746" fill="none" stroke-width="1.3" stroke-width="1.8"/><path d="M181.8 358h-2.6a2.5 2.5 0 0 0 0 5h2.6M184.4 358h2.6a2.5 2.5 0 0 1 0 5h-2.6M180.8 360.5h4.6" stroke="#444746" fill="none" stroke-width="1.3" stroke-width="1.6"/><rect x="177.55" y="399.55" width="10.90" height="11.20" rx="1.2" stroke="#444746" fill="none" stroke-width="1.3"/><path d="M179.9 405.2l2 2 3.9-4" stroke="#444746" fill="none" stroke-width="1.3" stroke-width="1.3"/><rect x="175.65" y="428.85" width="14.5" height="9.3" rx="4.65" stroke="#444746" fill="none" stroke-width="1.3"/><path d="M182.2 432.8h5.3l-2.65 2.6z" fill="#444746"/><circle cx="183" cy="462" r="6.1" stroke="#444746" fill="none" stroke-width="1.3" stroke-width="1.3"/><circle cx="180.6" cy="460.5" r=".95" fill="#444746"/><circle cx="185.4" cy="460.5" r=".95" fill="#444746"/><path d="M179.9 463.9h6.2a3.1 2.1 0 0 1-6.2 0z" fill="#444746"/><rect x="175.6" y="486.6" width="11.3" height="5" rx="2.5" stroke="#444746" fill="none" stroke-width="1.3" stroke-width="1.2"/><path d="M177.9 488.4v2.4M176.7 489.6h2.4" stroke="#444746" fill="none" stroke-width="1.3" stroke-width="1"/><rect x="179.5" y="491.1" width="11" height="5.1" rx="2.55" fill="#fff" stroke="#444746" stroke-width="1.2"/><path d="M185.1 493h2.8l-1.4 1.4z" fill="#444746"/><path d="M176.25 540.8V529.4a.8.8 0 0 1 .8-.8h12a.8.8 0 0 1 .8.8v9a.8.8 0 0 1-.8.8h-10.6z" stroke="#444746" fill="none" stroke-width="1.3"/><path d="M182.5 530.8v6.2M179.4 533.9h6.2" stroke="#444746" fill="none" stroke-width="1.3" stroke-width="1.3"/><path d="M176.95 558.4a.8.8 0 0 1 .8-.8h10.6a.8.8 0 0 1 .8.8v8.2l-2.7 2.5h-8.7a.8.8 0 0 1-.8-.8z" stroke="#444746" fill="none" stroke-width="1.3"/><path d="M189 566.6h-2.4a.9.9 0 0 0-.9.9v2.4z" fill="#444746"/><path d="M179.1 561.6h6.9M179.1 564.3h3.4" stroke="#444746" fill="none" stroke-width="1.3" stroke-width="1.2"/></svg>
<div class="a" style="left:164px;top:179.5px;width:288px;height:1px;background:#dadce0"></div>
<div class="a" style="left:164px;top:309px;width:288px;height:1px;background:#dadce0"></div>
<div class="a" style="left:164px;top:382px;width:288px;height:1px;background:#dadce0"></div>
<div class="a" style="left:164px;top:513px;width:288px;height:1px;background:#dadce0"></div>
<svg class="a" style="left:0;top:0;z-index:6" width="790" height="730" viewBox="0 0 790 730"><path fill-rule="evenodd" fill="#d21d20" d="M168.3 266.8H449.3Q457.3 266.8 457.3 273.8V305.8Q457.3 312.8 449.3 312.8H168.3Q158.3 312.8 158.3 306.8V272.8Q158.3 266.8 168.3 266.8Z M174.6 270.9H440.2Q446.2 270.9 446.2 276.9V302.4Q446.2 308.4 440.2 308.4H174.6Q168.6 308.4 168.6 302.4V276.9Q168.6 270.9 174.6 270.9Z"/><path fill="#e4787a" d="M455.4 274 Q456.5 276 456.6 280 V300 Q456.5 304 455.4 306 L457.3 305 V275 Z"/><path fill="#b5161a" d="M158.3 273 Q158.3 267.5 163 267.2 L162 272 Q161 274 161 277 V301 Q161 305 162 307 L163.5 311.8 Q158.3 311 158.3 306 Z"/></svg>
<svg class="a" style="left:0;top:0" width="790" height="730" viewBox="0 0 790 730"><polygon points="119.8,51.2 127.3,49.5 153.9,52 148.1,76.4 140.4,77.9 136,68.6 99.5,115.4 89,114.5 70.7,91.4 127.1,57.5" fill="#000"/><polygon points="153.9,52 127.3,49.5 134.6,55.8 78.3,89.5 99.5,115.4 143.5,66.9 147.9,75.4" fill="#ff0000"/><polygon points="127.2,312.6 136.1,311 165.2,317.3 157.3,343 148.4,343.9 143.6,334 97.7,381.4 86.1,379.2 68.4,352.2 135.1,320.2" fill="#000"/><polygon points="165.2,317.3 136.1,311 144,319.2 77.3,350.4 97.7,381.4 152.5,332.5 157.3,343" fill="#ff0000"/></svg>

</body></html>
